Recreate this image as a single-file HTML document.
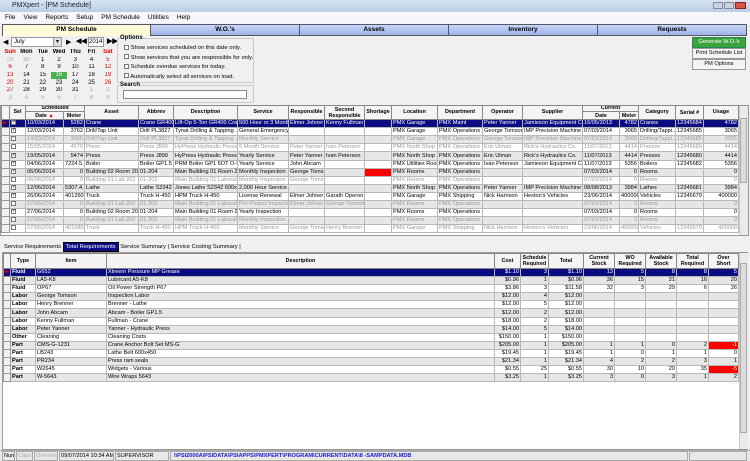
<!DOCTYPE html>
<html><head><meta charset="utf-8"><style>
*{margin:0;padding:0;box-sizing:border-box}
body{width:750px;height:461px;background:#f0f0f0;font-family:"Liberation Sans",sans-serif;font-size:6px;color:#000;position:relative;overflow:hidden}
.a{position:absolute}
#title{left:0;top:0;width:750px;height:12px;background:linear-gradient(#d7e4f2,#b9cde4);font-size:7px;line-height:12px;padding-left:12px;color:#223}
#menu{left:0;top:12px;width:750px;height:11px;background:#f5f7fb;font-size:6.5px;line-height:11px}
#menu span{margin-left:5px;margin-right:3px}
.tab{top:24px;height:12px;border:1px solid #556;background:linear-gradient(#c8d5f7,#9fb3ea);font-weight:bold;font-size:6.5px;text-align:center;line-height:10px}
table{border-collapse:collapse;table-layout:fixed;position:absolute}
td,th{border:1px solid #b8b8b8;white-space:nowrap;overflow:hidden;padding:0 1px;font-size:5.6px;line-height:7px;height:8.1px;font-weight:normal}
th{background:#f4f4f4;font-weight:bold;border-color:#888;text-align:center;font-size:5.4px}
.g td{color:#9a9a9a}
tr:nth-child(odd) td{background:#e6e6e6}
tr:nth-child(even) td{background:#fff}
tr.s td{background:#0b0b82!important;color:#fff}
.r{text-align:right}
.ind{background:#f0f0f0!important;border-color:#999}
.red{background:#f00!important;color:#fff}
.cb{display:inline-block;width:5px;height:5px;border:1px solid #777;background:#fff;vertical-align:middle;font-size:5px;line-height:3px;text-align:center}
.cal td{border:none;background:transparent!important;text-align:center;height:7.6px;font-size:6px;line-height:7px;color:#000;padding:0}
.cal .o{color:#aaa}.cal .w{color:#d00}
.btn{left:692px;width:54px;height:11px;border:1px solid #999;background:#f4f4f4;text-align:center;font-size:5.6px;line-height:9px}
.sb{position:absolute;top:0;height:10px;border:1px solid #aaa;padding-left:1px;white-space:nowrap;overflow:hidden;line-height:8px}
</style></head><body>
<div id="title" class="a">PMXpert - [PM Schedule]</div>
<div class="a" style="left:713px;top:2px;width:10px;height:7px;background:#c9d3df;border:1px solid #889"></div>
<div class="a" style="left:724px;top:2px;width:10px;height:7px;background:#c9d3df;border:1px solid #889"></div>
<div class="a" style="left:735px;top:2px;width:11px;height:7px;background:#d9534a;border:1px solid #822"></div>
<div id="menu" class="a"><span>File</span><span>View</span><span>Reports</span><span>Setup</span><span>PM Schedule</span><span>Utilities</span><span>Help</span></div>
<div class="a tab" style="left:2px;width:149px;background:#fdfbd8;border-bottom:none">PM Schedule</div>
<div class="a tab" style="left:150px;width:150px">W.O.'s</div>
<div class="a tab" style="left:299px;width:150px">Assets</div>
<div class="a tab" style="left:448px;width:150px">Inventory</div>
<div class="a tab" style="left:597px;width:150px">Requests</div>

<div class="a" style="left:3px;top:38px;font-size:7px">&#9664;</div>
<div class="a" style="left:11px;top:37px;width:51px;height:10px;border:1px solid #999;background:#fff;font-size:6px;line-height:8px;padding-left:2px">July<span style="position:absolute;right:0;top:0;width:8px;height:8px;background:#ddd;border-left:1px solid #999;text-align:center">▾</span></div>
<div class="a" style="left:66px;top:38px;font-size:7px">&#9654;</div>
<div class="a" style="left:76px;top:37px;font-size:7px;font-weight:bold">◀◀</div>
<div class="a" style="left:88px;top:37px;width:16px;height:10px;border:1px solid #999;background:#fff;font-size:6px;line-height:8px">2014</div>
<div class="a" style="left:107px;top:37px;font-size:7px;font-weight:bold">▶▶</div>
<table class="cal" style="left:2px;top:49px;width:114px">
<tr><td class="w" style="font-weight:bold">Sun</td><td style="font-weight:bold">Mon</td><td style="font-weight:bold">Tue</td><td style="font-weight:bold">Wed</td><td style="font-weight:bold">Thu</td><td style="font-weight:bold">Fri</td><td class="w" style="font-weight:bold">Sat</td></tr>
<tr><td class="o">29</td><td class="o">30</td><td>1</td><td>2</td><td>3</td><td>4</td><td class="w">5</td></tr>
<tr><td class="w">6</td><td>7</td><td>8</td><td>9</td><td>10</td><td>11</td><td class="w">12</td></tr>
<tr><td class="w">13</td><td>14</td><td>15</td><td style="background:#4caf50!important;color:#dfd">16</td><td>17</td><td>18</td><td class="w">19</td></tr>
<tr><td class="w">20</td><td>21</td><td>22</td><td>23</td><td>24</td><td>25</td><td class="w">26</td></tr>
<tr><td class="w">27</td><td>28</td><td>29</td><td>30</td><td>31</td><td class="o">1</td><td class="o">2</td></tr>
<tr><td class="o">3</td><td class="o">4</td><td class="o">5</td><td class="o">6</td><td class="o">7</td><td class="o">8</td><td class="o">9</td></tr>
</table>
<div class="a" style="left:117px;top:38px;width:137px;height:45px;border:1px solid #ccc"></div>
<div class="a" style="left:120px;top:35px;font-weight:bold;font-size:6px;background:#f0f0f0">Options</div>
<div class="a" style="left:124px;top:44px;font-size:5.8px;line-height:9.5px"><span class="cb"></span> Show services scheduled on this date only.<br><span class="cb"></span> Show services that you are responsible for only.<br><span class="cb"></span> Schedule overdue services for today.<br><span class="cb"></span> Automatically select all services on load.</div>
<div class="a" style="left:117px;top:85px;width:137px;height:18px;border:1px solid #ccc"></div>
<div class="a" style="left:120px;top:82px;font-weight:bold;font-size:6px;background:#f0f0f0">Search</div>
<div class="a" style="left:123px;top:90px;width:124px;height:9px;border:1px solid #888;background:#fff"></div>
<div class="a btn" style="top:37px;background:#3ca33c;color:#fff;border-color:#285">Generate W.O.'s</div>
<div class="a btn" style="top:48px">Print Schedule List</div>
<div class="a btn" style="top:59px">PM Options</div>

<div class="a" style="left:0;top:105px;width:749px;height:131px;background:#fff;border:1px solid #999"></div>
<table style="left:1px;top:105px;width:737px">
<colgroup><col style="width:8px"><col style="width:16px"><col style="width:38px"><col style="width:21px"><col style="width:54px"><col style="width:35px"><col style="width:64px"><col style="width:51px"><col style="width:36px"><col style="width:40px"><col style="width:27px"><col style="width:46px"><col style="width:45px"><col style="width:40px"><col style="width:60px"><col style="width:37px"><col style="width:19px"><col style="width:37px"><col style="width:28px"><col style="width:35px"></colgroup>
<tr><th rowspan="2" style="height:14px"></th><th rowspan="2">Sel</th><th colspan="2" style="height:6px;line-height:5px">Scheduled</th><th rowspan="2">Asset</th><th rowspan="2">Abbrev</th><th rowspan="2">Description</th><th rowspan="2">Service</th><th rowspan="2">Responsible</th><th rowspan="2" style="line-height:6px;white-space:normal">Second Responsible</th><th rowspan="2">Shortage</th><th rowspan="2">Location</th><th rowspan="2">Department</th><th rowspan="2">Operator</th><th rowspan="2">Supplier</th><th colspan="2" style="height:6px;line-height:5px">Current</th><th rowspan="2">Category</th><th rowspan="2" style="line-height:6px;white-space:normal">Serial #</th><th rowspan="2">Usage</th></tr>
<tr><th style="height:8px;line-height:6px">Date <span style="color:#d00">▲</span></th><th style="line-height:6px">Meter</th><th style="line-height:6px">Date</th><th style="line-height:6px">Meter</th></tr>
<tr class="s"><td class="ind" style="color:#d00">▶</td><td><span class="cb" style="color:#000">✓</span></td><td>10/03/2014</td><td class="r">5282</td><td>Crane</td><td>Crane GR400</td><td>Lift-Op 5-Ton GR400 Crane</td><td>500 Hour or 3 Month</td><td>Elmer Johner</td><td>Kenny Fullman</td><td class="red"></td><td>PMX Garage</td><td>PMX Maint</td><td>Peter Yanner</td><td>Jamieson Equipment Co...</td><td>16/05/2013</td><td class="r">4782</td><td>Cranes</td><td>12345684</td><td class="r">4782</td></tr>
<tr><td class="ind"></td><td><span class="cb">✓</span></td><td>12/03/2014</td><td class="r">3762</td><td>Drill/Tap Unit</td><td>Drill PL3827</td><td>Tynat Drilling &amp; Tapping ...</td><td>General Emergency...</td><td></td><td></td><td></td><td>PMX Garage</td><td>PMX Operations</td><td>George Tomson</td><td>IMP Precision Machine</td><td>07/03/2014</td><td class="r">3065</td><td>Drilling/Tappi...</td><td>12345685</td><td class="r">3065</td></tr>
<tr class="g"><td class="ind"></td><td><span class="cb">✓</span></td><td>14/03/2014</td><td class="r">3065</td><td>Drill/Tap Unit</td><td>Drill PL3827</td><td>Tynat Drilling &amp; Tapping ...</td><td>Monthly Service</td><td></td><td></td><td></td><td>PMX Garage</td><td>PMX Operations</td><td>George Tomson</td><td>IMP Precision Machine</td><td>07/03/2014</td><td class="r">3065</td><td>Drilling/Tappi...</td><td>12345685</td><td class="r">3065</td></tr>
<tr class="g"><td class="ind"></td><td><span class="cb"></span></td><td>15/05/2014</td><td class="r">4579</td><td>Press</td><td>Press J890</td><td>HyPress Hydraulic Press ...</td><td>6 Month Service</td><td>Peter Yanner</td><td>Ivan Peterson</td><td></td><td>PMX North Shop</td><td>PMX Operations</td><td>Eric Ulman</td><td>Rick's Hydraulics Co.</td><td>11/07/2013</td><td class="r">4414</td><td>Presses</td><td>12345680</td><td class="r">4414</td></tr>
<tr><td class="ind"></td><td><span class="cb">✓</span></td><td>19/05/2014</td><td class="r">5474</td><td>Press</td><td>Press J890</td><td>HyPress Hydraulic Press ...</td><td>Yearly Service</td><td>Peter Yanner</td><td>Ivan Peterson</td><td></td><td>PMX North Shop</td><td>PMX Operations</td><td>Eric Ulman</td><td>Rick's Hydraulics Co.</td><td>11/07/2013</td><td class="r">4414</td><td>Presses</td><td>12345680</td><td class="r">4414</td></tr>
<tr><td class="ind"></td><td><span class="cb">✓</span></td><td>04/06/2014</td><td class="r">7224.5...</td><td>Boiler</td><td>Boiler GP1.5</td><td>PRM Boiler GP1 5OT O-S...</td><td>Yearly Service</td><td>John Abcam</td><td></td><td></td><td>PMX Utilities Room</td><td>PMX Operations</td><td>Ivan Peterson</td><td>Jamieson Equipment Co...</td><td>11/07/2013</td><td class="r">5356</td><td>Boilers</td><td>12345682</td><td class="r">5356</td></tr>
<tr><td class="ind"></td><td><span class="cb">✓</span></td><td>06/06/2014</td><td class="r">0</td><td>Building 02 Room 204</td><td>01-204</td><td>Main Building 01 Room 204</td><td>Monthly Inspection</td><td>George Toms...</td><td></td><td class="red"></td><td>PMX Rooms</td><td>PMX Operations</td><td></td><td></td><td>07/03/2014</td><td class="r">0</td><td>Rooms</td><td></td><td class="r">0</td></tr>
<tr class="g"><td class="ind"></td><td><span class="cb"></span></td><td>06/06/2014</td><td class="r">0</td><td>Building 01 Lab 202</td><td>01-202</td><td>Main Building 01 Laborat...</td><td>Monthly Inspection</td><td>George Toms...</td><td></td><td></td><td>PMX Rooms</td><td>PMX Operations</td><td></td><td></td><td>07/03/2014</td><td class="r">0</td><td>Rooms</td><td></td><td class="r">0</td></tr>
<tr><td class="ind"></td><td><span class="cb">✓</span></td><td>12/06/2014</td><td class="r">5307.4...</td><td>Lathe</td><td>Lathe S2342</td><td>Jones Lathe S2342 600x...</td><td>2,000 Hour Service</td><td></td><td></td><td></td><td>PMX North Shop</td><td>PMX Operations</td><td>Peter Yanner</td><td>IMP Precision Machine</td><td>08/08/2013</td><td class="r">3984</td><td>Lathes</td><td>12345681</td><td class="r">3984</td></tr>
<tr><td class="ind"></td><td><span class="cb">✓</span></td><td>26/06/2014</td><td class="r">401260</td><td>Truck</td><td>Truck H-450</td><td>HPM Truck H-450</td><td>License Renewal</td><td>Elmer Johner</td><td>Garath Operon</td><td></td><td>PMX Garage</td><td>PMX Shipping</td><td>Nick Harrison</td><td>Heston's Vehicles</td><td>23/06/2014</td><td class="r">400000</td><td>Vehicles</td><td>12345679</td><td class="r">400000</td></tr>
<tr class="g"><td class="ind"></td><td><span class="cb"></span></td><td>27/06/2014</td><td class="r">0</td><td>Building 01 Lab 202</td><td>01-202</td><td>Main Building 01 Laborat...</td><td>Pre-Project Inspection</td><td>Elmer Johner</td><td>George Tomson</td><td></td><td>PMX Rooms</td><td>PMX Operations</td><td></td><td></td><td>07/03/2014</td><td class="r">0</td><td>Rooms</td><td></td><td class="r">0</td></tr>
<tr><td class="ind"></td><td><span class="cb">✓</span></td><td>27/06/2014</td><td class="r">0</td><td>Building 02 Room 204</td><td>01-204</td><td>Main Building 01 Room 204</td><td>Yearly Inspection</td><td></td><td></td><td></td><td>PMX Rooms</td><td>PMX Operations</td><td></td><td></td><td>07/03/2014</td><td class="r">0</td><td>Rooms</td><td></td><td class="r">0</td></tr>
<tr class="g"><td class="ind"></td><td><span class="cb"></span></td><td>27/06/2014</td><td class="r">0</td><td>Building 01 Lab 202</td><td>01-202</td><td>Main Building 01 Laborat...</td><td>Monthly Inspection</td><td></td><td></td><td></td><td>PMX Rooms</td><td>PMX Operations</td><td></td><td></td><td>07/03/2014</td><td class="r">0</td><td>Rooms</td><td></td><td class="r">0</td></tr>
<tr class="g"><td class="ind"></td><td><span class="cb"></span></td><td>27/06/2014</td><td class="r">401680</td><td>Truck</td><td>Truck H-450</td><td>HPM Truck H-450</td><td>Monthly Service</td><td>George Tomson</td><td>Henry Brenner</td><td></td><td>PMX Garage</td><td>PMX Shipping</td><td>Nick Harrison</td><td>Heston's Vehicles</td><td>23/06/2014</td><td class="r">400000</td><td>Vehicles</td><td>12345679</td><td class="r">400000</td></tr>
</table>
<div class="a" style="left:739px;top:106px;width:9px;height:129px;background:#eaeaea;border-left:1px solid #ccc"></div>
<div class="a" style="left:740px;top:118px;width:7px;height:65px;background:#dcdcdc;border:1px solid #aaa"></div>

<div class="a" style="left:4px;top:243px;font-size:5.8px;line-height:8px;white-space:nowrap">Service Requirements <span style="background:#0b0b82;color:#fff;padding:1px 2px;border:1px solid #000">Total Requirements</span> Service Summary | Service Costing Summary |</div>

<div class="a" style="left:2px;top:252px;width:746px;height:198px;background:#fff;border:1px solid #999"></div>
<table style="left:3px;top:253px;width:735px">
<colgroup><col style="width:7px"><col style="width:25px"><col style="width:71px"><col style="width:388px"><col style="width:26px"><col style="width:28px"><col style="width:35px"><col style="width:31px"><col style="width:31px"><col style="width:31px"><col style="width:32px"><col style="width:30px"></colgroup>
<tr><th style="height:15px"></th><th>Type</th><th>Item</th><th>Description</th><th>Cost</th><th style="line-height:6px;white-space:normal">Schedule Required</th><th>Total</th><th style="line-height:6px;white-space:normal">Current Stock</th><th style="line-height:6px;white-space:normal">WO Required</th><th style="line-height:6px;white-space:normal">Available Stock</th><th style="line-height:6px;white-space:normal">Total Required</th><th style="line-height:6px;white-space:normal">Over Short</th></tr>
<tr class="s"><td class="ind" style="color:#d00">▶</td><td style="font-weight:bold">Fluid</td><td>G652</td><td>Xtreem Pressure MP Grease</td><td class="r">$1.10</td><td class="r">3</td><td class="r">$1.10</td><td class="r">13</td><td class="r">5</td><td class="r">8</td><td class="r">8</td><td class="r">5</td></tr>
<tr><td class="ind"></td><td style="font-weight:bold">Fluid</td><td>LA5-K8</td><td>Lubricant A5-K8</td><td class="r">$0.96</td><td class="r">1</td><td class="r">$0.96</td><td class="r">36</td><td class="r">15</td><td class="r">21</td><td class="r">16</td><td class="r">20</td></tr>
<tr><td class="ind"></td><td style="font-weight:bold">Fluid</td><td>OP67</td><td>Oil Power Strength P67</td><td class="r">$3.86</td><td class="r">3</td><td class="r">$11.58</td><td class="r">32</td><td class="r">3</td><td class="r">29</td><td class="r">6</td><td class="r">26</td></tr>
<tr><td class="ind"></td><td style="font-weight:bold">Labor</td><td>George Tomson</td><td>Inspection Labor</td><td class="r">$12.00</td><td class="r">4</td><td class="r">$12.00</td><td></td><td></td><td></td><td></td><td></td></tr>
<tr><td class="ind"></td><td style="font-weight:bold">Labor</td><td>Henry Brenner</td><td>Brenner - Lathe</td><td class="r">$12.00</td><td class="r">5</td><td class="r">$12.00</td><td></td><td></td><td></td><td></td><td></td></tr>
<tr><td class="ind"></td><td style="font-weight:bold">Labor</td><td>John Abcam</td><td>Abcam - Boiler GP1.5</td><td class="r">$12.00</td><td class="r">2</td><td class="r">$12.00</td><td></td><td></td><td></td><td></td><td></td></tr>
<tr><td class="ind"></td><td style="font-weight:bold">Labor</td><td>Kenny Fullman</td><td>Fullman - Crane</td><td class="r">$18.00</td><td class="r">2</td><td class="r">$18.00</td><td></td><td></td><td></td><td></td><td></td></tr>
<tr><td class="ind"></td><td style="font-weight:bold">Labor</td><td>Peter Yanner</td><td>Yanner - Hydraulic Press</td><td class="r">$14.00</td><td class="r">5</td><td class="r">$14.00</td><td></td><td></td><td></td><td></td><td></td></tr>
<tr><td class="ind"></td><td style="font-weight:bold">Other</td><td>Cleaning</td><td>Cleaning Costs</td><td class="r">$150.00</td><td class="r">1</td><td class="r">$150.00</td><td></td><td></td><td></td><td></td><td></td></tr>
<tr><td class="ind"></td><td style="font-weight:bold">Part</td><td>CMS-G-1231</td><td>Crane Anchor Bolt Set MS-G</td><td class="r">$205.00</td><td class="r">1</td><td class="r">$205.00</td><td class="r">1</td><td class="r">1</td><td class="r">0</td><td class="r">2</td><td class="r red">-1</td></tr>
<tr><td class="ind"></td><td style="font-weight:bold">Part</td><td>LB243</td><td>Lathe Belt 600x450</td><td class="r">$19.45</td><td class="r">1</td><td class="r">$19.45</td><td class="r">1</td><td class="r">0</td><td class="r">1</td><td class="r">1</td><td class="r">0</td></tr>
<tr><td class="ind"></td><td style="font-weight:bold">Part</td><td>PR234</td><td>Press ram seals</td><td class="r">$21.34</td><td class="r">1</td><td class="r">$21.34</td><td class="r">4</td><td class="r">2</td><td class="r">2</td><td class="r">3</td><td class="r">1</td></tr>
<tr><td class="ind"></td><td style="font-weight:bold">Part</td><td>W2645</td><td>Widgets - Various</td><td class="r">$0.55</td><td class="r">25</td><td class="r">$0.55</td><td class="r">30</td><td class="r">10</td><td class="r">20</td><td class="r">35</td><td class="r red">-5</td></tr>
<tr><td class="ind"></td><td style="font-weight:bold">Part</td><td>W-5643</td><td>Wire Wraps 5643</td><td class="r">$3.25</td><td class="r">1</td><td class="r">$3.25</td><td class="r">3</td><td class="r">0</td><td class="r">3</td><td class="r">1</td><td class="r">2</td></tr>
</table>
<div class="a" style="left:739px;top:253px;width:9px;height:196px;background:#eaeaea;border-left:1px solid #ccc"></div>
<div class="a" style="left:740px;top:263px;width:7px;height:170px;background:#dcdcdc;border:1px solid #aaa"></div>

<div class="a" style="left:0;top:450px;width:750px;height:11px;background:#e8e8e8;border-top:1px solid #aaa;font-size:5.6px">
<span class="sb" style="left:2px;width:13px">Num</span>
<span class="sb" style="left:16px;width:17px;color:#aaa">Caps</span>
<span class="sb" style="left:34px;width:24px;color:#aaa">Overwrite</span>
<span class="sb" style="left:59px;width:55px">09/07/2014 10:34 AM</span>
<span class="sb" style="left:115px;width:54px">SUPERVISOR</span>
<span class="sb" style="left:170px;width:518px;color:#1a1ad0;font-weight:bold;padding-left:3px">\\PSI2000A\PSIDATA\PSIAPPS\PMXPERT\PROGRAM\CURRENT\DATA\8 -SAMPDATA.MDB</span>
<span class="sb" style="left:689px;width:58px"></span>
</div>
</body></html>
